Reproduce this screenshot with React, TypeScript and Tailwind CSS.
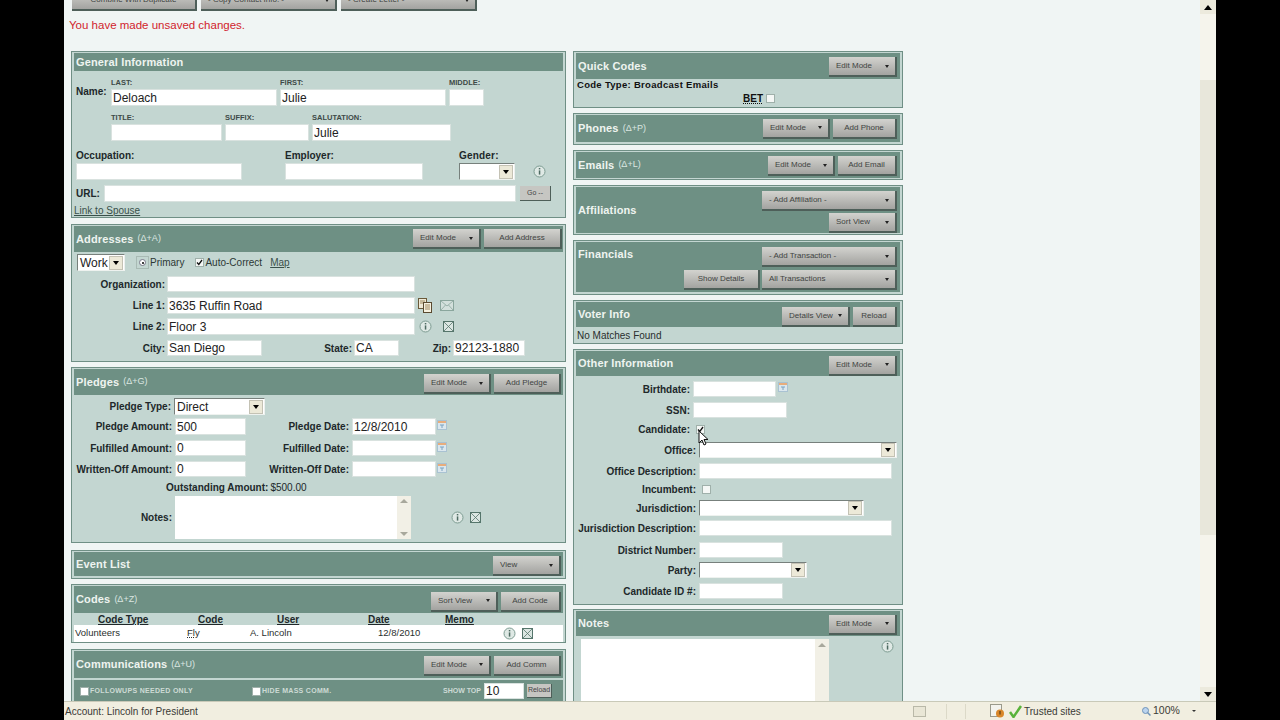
import React from 'react';

const sans = { fontFamily: '"Liberation Sans", Arial, sans-serif' };

function Panel({ className, children }: { className: string; children: React.ReactNode }) {
  return (
    <div className={`border border-[#6f8f85] bg-[#c3d6d1] px-[2px] pt-[1px] overflow-hidden ${className}`}>
      {children}
    </div>
  );
}

function Header({ title, hint, className, btnClass = '', children }: { title: string; hint?: string; className: string; btnClass?: string; children?: React.ReactNode }) {
  return (
    <div className={`flex items-center bg-[#6e9084] pl-[2px] ${className}`}>
      <span className="whitespace-nowrap text-[11px] font-bold tracking-[0.15px] text-[#eef4f0]">{title}</span>
      {hint && <span className="ml-[4px] whitespace-nowrap text-[9px] text-[#dbe6e1]">{hint}</span>}
      <div className={`ml-auto flex gap-[3px] ${btnClass}`}>{children}</div>
    </div>
  );
}

function Btn({ label, w, caret }: { label: string; w: string; caret?: boolean }) {
  return (
    <div className={`flex h-[20px] shrink-0 items-center whitespace-nowrap bg-gradient-to-b from-[#d3d3cf] to-[#a3a3a0] border-r-2 border-b-2 border-[#4e5f59] text-[8px] text-[#3f4442] ${w} ${caret ? 'pl-[7px] pr-[6px]' : 'justify-center'}`}>
      <span>{label}</span>
      {caret && <span className="ml-auto h-0 w-0 border-x-[2.5px] border-t-[3px] border-x-transparent border-t-[#222]" />}
    </div>
  );
}

function Input({ w, value, h = 'h-[17px]', cls = 'text-[12px]' }: { w: string; value?: string; h?: string; cls?: string }) {
  return (
    <input
      readOnly
      value={value ?? ''}
      className={`block shrink-0 bg-white border border-[#d9e2df] px-[1px] text-[#222] outline-none ${cls} ${w} ${h}`}
    />
  );
}

function Select({ w, value, h = 'h-[17px]' }: { w: string; value?: string; h?: string }) {
  return (
    <div className={`flex shrink-0 items-center bg-white border-t border-l border-[#77807c] border-r border-r-[#eef2ef] border-b border-b-[#eef2ef] pl-[2px] pr-[1px] text-[12px] text-[#222] ${w} ${h}`}>
      <span>{value}</span>
      <span className="ml-auto flex h-[14px] w-[14px] items-center justify-center bg-[#ece9d8] border border-[#c4c2b4]">
        <span className="h-0 w-0 border-x-[3.5px] border-t-[4px] border-x-transparent border-t-black" />
      </span>
    </div>
  );
}

function Label({ w, children }: { w: string; children: React.ReactNode }) {
  return <span className={`shrink-0 whitespace-nowrap text-right text-[10px] font-bold text-[#20282a] ${w}`}>{children}</span>;
}

function Micro({ children }: { children: React.ReactNode }) {
  return <div className="h-[12px] text-[7.5px] font-bold leading-[12px] text-[#3d4a47]">{children}</div>;
}

function Info({ className = '' }: { className?: string }) {
  return (
    <svg className={`shrink-0 ${className}`} width="13" height="13" viewBox="0 0 13 13" fill="none">
      <circle cx="6.5" cy="6.5" r="5.5" stroke="#7d9c92" strokeWidth="1" fill="#dfe9e5" />
      <rect x="5.8" y="5.4" width="1.5" height="4.2" fill="#4d6a61" />
      <rect x="5.8" y="3" width="1.5" height="1.4" fill="#4d6a61" />
    </svg>
  );
}

function XBox({ className = '' }: { className?: string }) {
  return (
    <svg className={`shrink-0 ${className}`} width="11" height="11" viewBox="0 0 11 11" fill="none">
      <rect x="0.5" y="0.5" width="10" height="10" stroke="#55756b" fill="#dbe6e2" />
      <path d="M1 1l9 9M10 1l-9 9" stroke="#55756b" strokeWidth="0.8" />
    </svg>
  );
}

function Envelope({ className = '' }: { className?: string }) {
  return (
    <svg className={`shrink-0 ${className}`} width="14" height="11" viewBox="0 0 14 11" fill="none">
      <rect x="0.5" y="0.5" width="13" height="10" stroke="#8aa69d" fill="#d3e0dc" />
      <path d="M1 1l6 5 6-5M1 10l4.5-5M13 10L8.500 5" stroke="#8aa69d" strokeWidth="0.8" />
    </svg>
  );
}

function Copy({ className = '' }: { className?: string }) {
  return (
    <svg className={`shrink-0 ${className}`} width="14" height="15" viewBox="0 0 14 15" fill="none">
      <rect x="0.5" y="0.500" width="8" height="10" fill="#efe9d6" stroke="#6b5a3a" />
      <rect x="5.500" y="4.500" width="8" height="10" fill="#f6f1df" stroke="#5a4a30" />
      <path d="M2 3h5M2 5h3M7 7h5M7 9h5M7 11h5" stroke="#8a6f3f" strokeWidth="0.8" />
    </svg>
  );
}

function Cal({ className = '' }: { className?: string }) {
  return (
    <svg className={`shrink-0 ${className}`} width="10" height="10" viewBox="0 0 10 10" fill="none">
      <rect x="0.500" y="0.500" width="9" height="9" fill="#dbe7ee" stroke="#a9c2d2" />
      <rect x="1" y="1" width="8" height="2" fill="#e8ad7c" />
      <path d="M3 5h4M5 5v3" stroke="#7ba3c2" strokeWidth="1" />
    </svg>
  );
}

function Check({ checked, className = '' }: { checked?: boolean; className?: string }) {
  return (
    <span className={`flex h-[9px] w-[9px] shrink-0 items-center justify-center bg-[#f4f7f5] border border-[#9fb0aa] ${className}`}>
      {checked && (
        <svg width="7" height="7" viewBox="0 0 7 7" fill="none">
          <path d="M1 3.500l1.800 2L6 1" stroke="#111" strokeWidth="1.300" />
        </svg>
      )}
    </span>
  );
}

function LeftColumn() {
  return (
    <div className="flex w-[495px] shrink-0 flex-col">
      <Panel className="h-[167px]">
        <Header title="General Information" className="h-[18px]" />
        <div className="mt-[6px] flex">
          <div className="w-[37px] pl-[2px] pt-[7px] text-[10px] font-bold text-[#20282a]">Name:</div>
          <div className="flex gap-[3px]">
            <div><Micro>LAST:</Micro><Input w="w-[166px]" value="Deloach" /></div>
            <div><Micro>FIRST:</Micro><Input w="w-[166px]" value="Julie" /></div>
            <div><Micro>MIDDLE:</Micro><Input w="w-[35px]" /></div>
          </div>
        </div>
        <div className="ml-[37px] mt-[6px] flex gap-[3px]">
          <div><Micro>TITLE:</Micro><Input w="w-[111px]" /></div>
          <div><Micro>SUFFIX:</Micro><Input w="w-[84px]" /></div>
          <div><Micro>SALUTATION:</Micro><Input w="w-[139px]" value="Julie" /></div>
        </div>
        <div className="ml-[2px] mt-[7px] flex items-end">
          <div>
            <div className="h-[15px] text-[10px] font-bold text-[#20282a]">Occupation:</div>
            <Input w="w-[166px]" />
          </div>
          <div className="ml-[43px]">
            <div className="h-[15px] text-[10px] font-bold text-[#20282a]">Employer:</div>
            <Input w="w-[138px]" />
          </div>
          <div className="ml-[36px]">
            <div className="h-[15px] text-[10px] font-bold tracking-[0.2px] text-[#20282a]">Gender:</div>
            <Select w="w-[56px]" />
          </div>
          <Info className="mb-[2px] ml-[18px]" />
        </div>
        <div className="ml-[2px] mt-[5px] flex items-center">
          <span className="w-[28px] text-[10px] font-bold text-[#20282a]">URL:</span>
          <Input w="w-[412px]" />
          <div className="ml-[4px] flex h-[15px] w-[31px] items-center justify-center bg-[#c6c6c2] border-r border-b border-[#4e5f59] text-[7px] text-[#444]">Go --</div>
        </div>
        <div className="mt-[1px] text-[10px] text-[#39504a] underline">Link to Spouse</div>
      </Panel>

      <Panel className="mt-[6px] h-[138px]">
        <Header title="Addresses" hint="(Δ+A)" className="h-[26px] pr-[1px]">
          <Btn label="Edit Mode" w="w-[68px]" caret />
          <Btn label="Add Address" w="w-[78px]" />
        </Header>
        <div className="ml-[3px] mt-[2px] flex items-center text-[10px] text-[#2c3835]">
          <Select w="w-[48px]" value="Work" />
          <span className="ml-[11px] flex h-[13px] w-[13px] items-center justify-center border border-[#a8bab4]">
            <span className="h-[7px] w-[7px] rounded-full border border-[#778] bg-[#fff] p-[1.500px]"><span className="block h-full w-full rounded-full bg-black" /></span>
          </span>
          <span className="ml-[1px]">Primary</span>
          <Check checked className="ml-[11px]" />
          <span className="ml-[1px]">Auto-Correct</span>
          <span className="ml-[8px] underline text-[#39504a]">Map</span>
        </div>
        <div className="mt-[5px] flex items-center gap-[2px]">
          <Label w="w-[91px]">Organization:</Label>
          <Input w="w-[248px]" h="h-[16px]" />
        </div>
        <div className="mt-[5px] flex items-center gap-[2px]">
          <Label w="w-[91px]">Line 1:</Label>
          <Input w="w-[248px]" value="3635 Ruffin Road" />
          <Copy className="ml-[1px]" />
          <Envelope className="ml-[6px]" />
        </div>
        <div className="mt-[4px] flex items-center gap-[2px]">
          <Label w="w-[91px]">Line 2:</Label>
          <Input w="w-[248px]" value="Floor 3" />
          <Info className="ml-[2px]" />
          <XBox className="ml-[9px]" />
        </div>
        <div className="mt-[5px] flex items-center gap-[2px]">
          <Label w="w-[91px]">City:</Label>
          <Input w="w-[95px]" value="San Diego" h="h-[16px]" />
          <Label w="w-[88px]">State:</Label>
          <Input w="w-[45px]" value="CA" h="h-[16px]" />
          <Label w="w-[50px]">Zip:</Label>
          <Input w="w-[72px]" value="92123-1880" h="h-[16px]" />
        </div>
      </Panel>

      <Panel className="mt-[5px] h-[176px]">
        <Header title="Pledges" hint="(Δ+G)" className="h-[26px] pr-[2px]" btnClass="mt-[4px]">
          <Btn label="Edit Mode" w="w-[67px]" caret />
          <Btn label="Add Pledge" w="w-[67px]" />
        </Header>
        <div className="mt-[3px] flex items-center gap-[3px]">
          <Label w="w-[97px]">Pledge Type:</Label>
          <Select w="w-[91px]" value="Direct" />
        </div>
        <div className="mt-[3px] flex items-center gap-[3px]">
          <Label w="w-[98px]">Pledge Amount:</Label>
          <Input w="w-[71px]" value="500" />
          <Label w="w-[100px]">Pledge Date:</Label>
          <Input w="w-[84px]" value="12/8/2010" />
          <Cal className="-ml-[2px] mb-[3px]" />
        </div>
        <div className="mt-[5px] flex items-center gap-[3px]">
          <Label w="w-[98px]">Fulfilled Amount:</Label>
          <Input w="w-[71px]" value="0" h="h-[16px]" />
          <Label w="w-[100px]">Fulfilled Date:</Label>
          <Input w="w-[84px]" h="h-[16px]" />
          <Cal className="-ml-[2px] mb-[3px]" />
        </div>
        <div className="mt-[5px] flex items-center gap-[3px]">
          <Label w="w-[98px]">Written-Off Amount:</Label>
          <Input w="w-[71px]" value="0" h="h-[16px]" />
          <Label w="w-[100px]">Written-Off Date:</Label>
          <Input w="w-[84px]" h="h-[16px]" />
          <Cal className="-ml-[2px] mb-[3px]" />
        </div>
        <div className="ml-[92px] mt-[4px] flex h-[12px] items-center text-[10px] text-[#20282a]">
          <span className="font-bold">Outstanding Amount:</span>
          <span className="ml-[2px]">$500.00</span>
        </div>
        <div className="mt-[3px] flex items-center gap-[3px]">
          <Label w="w-[98px]">Notes:</Label>
          <div className="flex h-[43px] w-[236px] justify-end bg-white">
            <div className="flex w-[14px] flex-col justify-between bg-[#f2f0e6] py-[3px]">
              <span className="mx-auto h-0 w-0 border-x-[4px] border-b-[4px] border-x-transparent border-b-[#a8a89c]" />
              <span className="mx-auto h-0 w-0 border-x-[4px] border-t-[4px] border-x-transparent border-t-[#a8a89c]" />
            </div>
          </div>
          <Info className="ml-[37px]" />
          <XBox className="ml-[3px]" />
        </div>
      </Panel>

      <Panel className="mt-[7px] h-[29px]">
        <Header title="Event List" className="h-[24px] pr-[2px]" btnClass="mt-[4px]">
          <Btn label="View" w="w-[68px]" caret />
        </Header>
      </Panel>

      <Panel className="mt-[5px] h-[59px]">
        <Header title="Codes" hint="(Δ+Z)" className="h-[27px] pr-[2px]" btnClass="mt-[4px]">
          <Btn label="Sort View" w="w-[67px]" caret />
          <Btn label="Add Code" w="w-[60px]" />
        </Header>
        <div className="flex h-[12px] items-center text-[10px] font-bold text-[#20282a] underline">
          <span className="ml-[24px] w-[100px]">Code Type</span>
          <span className="w-[79px]">Code</span>
          <span className="w-[91px]">User</span>
          <span className="w-[77px]">Date</span>
          <span>Memo</span>
        </div>
        <div className="flex h-[17px] items-center bg-white text-[9.500px] text-[#2a2f2e]">
          <span className="ml-[1px] w-[112px]">Volunteers</span>
          <span className="w-[63px] font-medium underline decoration-dotted">Fly</span>
          <span className="w-[128px]">A. Lincoln</span>
          <span className="w-[125px]">12/8/2010</span>
          <Info />
          <XBox className="ml-[6px]" />
        </div>
      </Panel>

      <Panel className="mt-[6px] h-[70px]">
        <Header title="Communications" hint="(Δ+U)" className="h-[27px] pr-[2px]" btnClass="mt-[2px]">
          <Btn label="Edit Mode" w="w-[67px]" caret />
          <Btn label="Add Comm" w="w-[67px]" />
        </Header>
        <div className="mt-[2px] h-[30px] bg-[#6e9084] pt-[3px]">
          <div className="flex h-[16px] items-center whitespace-nowrap text-[7px] font-bold tracking-[0.3px] text-[#cddbd5]">
            <Check className="ml-[6px] bg-white" />
            <span className="ml-[1px] w-[162px]">FOLLOWUPS NEEDED ONLY</span>
            <Check className="bg-white" />
            <span className="ml-[1px] w-[181px]">HIDE MASS COMM.</span>
            <span className="w-[41px] tracking-normal">SHOW TOP</span>
            <Input w="w-[40px]" value="10" h="h-[16px]" cls="text-[12px] font-normal tracking-normal" />
            <div className="ml-[3px] flex h-[14px] w-[25px] items-center justify-center bg-[#c6c6c2] border-r border-b border-[#4e5f59] text-[7px] font-normal tracking-normal text-[#444]">Reload</div>
          </div>
        </div>
      </Panel>
    </div>
  );
}

function RightColumn() {
  return (
    <div className="ml-[7px] flex w-[330px] shrink-0 flex-col">
      <Panel className="h-[57px]">
        <Header title="Quick Codes" className="h-[26px] pr-[3px]" btnClass="mt-[2px]">
          <Btn label="Edit Mode" w="w-[68px]" caret />
        </Header>
        <div className="ml-[1px] h-[12px] text-[9.500px] font-bold leading-[12px] tracking-[0.3px] text-[#111]">Code Type: Broadcast Emails</div>
        <div className="mr-[125px] flex items-center justify-end text-[10px] font-bold text-[#111]">
          <span className="underline decoration-dotted">BET</span>
          <Check className="ml-[3px]" />
        </div>
      </Panel>

      <Panel className="mt-[5px] h-[32px]">
        <Header title="Phones" hint="(Δ+P)" className="h-[27px] pr-[3px]">
          <Btn label="Edit Mode" w="w-[67px]" caret />
          <Btn label="Add Phone" w="w-[64px]" />
        </Header>
      </Panel>

      <Panel className="mt-[5px] h-[30px]">
        <Header title="Emails" hint="(Δ+L)" className="h-[26px] pr-[3px]" btnClass="mt-[2px]">
          <Btn label="Edit Mode" w="w-[67px]" caret />
          <Btn label="Add Email" w="w-[59px]" />
        </Header>
      </Panel>

      <Panel className="mt-[5px] h-[50px]">
        <Header title="Affiliations" className="h-[46px] pr-[3px]" btnClass="mt-[4px]">
          <div className="flex flex-col items-end gap-[2px]">
            <Btn label="- Add Affiliation -" w="w-[135px]" caret />
            <Btn label="Sort View" w="w-[68px]" caret />
          </div>
        </Header>
      </Panel>

      <Panel className="mt-[5px] h-[55px]">
        <div className="flex h-[50px] bg-[#6e9084] pl-[2px] pr-[3px]">
          <span className="mt-[4px] text-[11px] font-bold tracking-[0.15px] text-[#eef4f0]">Financials</span>
          <div className="ml-auto mt-[5px] flex flex-col items-end gap-[3px]">
            <Btn label="- Add Transaction -" w="w-[135px]" caret />
            <div className="flex gap-[2px]">
              <Btn label="Show Details" w="w-[76px]" />
              <Btn label="All Transactions" w="w-[135px]" caret />
            </div>
          </div>
        </div>
      </Panel>

      <Panel className="mt-[5px] h-[44px]">
        <Header title="Voter Info" className="h-[25px] pr-[3px]" btnClass="mt-[4px]">
          <Btn label="Details View" w="w-[68px]" caret />
          <Btn label="Reload" w="w-[44px]" />
        </Header>
        <div className="mt-[2px] ml-[1px] h-[14px] text-[10px] leading-[14px] text-[#2a2f2e]">No Matches Found</div>
      </Panel>

      <Panel className="mt-[5px] h-[256px]">
        <Header title="Other Information" className="h-[25px] pr-[3px]" btnClass="mt-[4px]">
          <Btn label="Edit Mode" w="w-[68px]" caret />
        </Header>
        <div className="mt-[5px] flex items-center gap-[3px]">
          <Label w="w-[114px]">Birthdate:</Label>
          <Input w="w-[83px]" h="h-[16px]" />
          <Cal className="-ml-[1px] mb-[4px]" />
        </div>
        <div className="mt-[5px] flex items-center gap-[3px]">
          <Label w="w-[114px]">SSN:</Label>
          <Input w="w-[94px]" h="h-[16px]" />
        </div>
        <div className="mt-[5px] flex h-[12px] items-center gap-[3px]">
          <Label w="w-[114px]">Candidate:</Label>
          <Check checked className="ml-[3px]" />
        </div>
        <div className="mt-[7px] flex items-center gap-[3px]">
          <Label w="w-[120px]">Office:</Label>
          <Select w="w-[198px]" h="h-[16px]" />
        </div>
        <div className="mt-[5px] flex items-center gap-[3px]">
          <Label w="w-[120px]">Office Description:</Label>
          <Input w="w-[193px]" h="h-[16px]" />
        </div>
        <div className="mt-[5px] flex h-[11px] items-center gap-[3px]">
          <Label w="w-[120px]">Incumbent:</Label>
          <Check className="ml-[3px]" />
        </div>
        <div className="mt-[5px] flex items-center gap-[3px]">
          <Label w="w-[120px]">Jurisdiction:</Label>
          <Select w="w-[165px]" h="h-[16px]" />
        </div>
        <div className="mt-[4px] flex items-center gap-[3px]">
          <Label w="w-[120px]">Jurisdiction Description:</Label>
          <Input w="w-[193px]" h="h-[16px]" />
        </div>
        <div className="mt-[6px] flex items-center gap-[3px]">
          <Label w="w-[120px]">District Number:</Label>
          <Input w="w-[84px]" h="h-[16px]" />
        </div>
        <div className="mt-[4px] flex items-center gap-[3px]">
          <Label w="w-[120px]">Party:</Label>
          <Select w="w-[108px]" h="h-[16px]" />
        </div>
        <div className="mt-[5px] flex items-center gap-[3px]">
          <Label w="w-[120px]">Candidate ID #:</Label>
          <Input w="w-[84px]" h="h-[16px]" />
        </div>
      </Panel>

      <Panel className="mt-[4px] h-[110px]">
        <Header title="Notes" className="h-[25px] pr-[3px]" btnClass="mt-[2px]">
          <Btn label="Edit Mode" w="w-[68px]" caret />
        </Header>
        <div className="mt-[3px] flex items-start">
          <div className="ml-[5px] flex h-[70px] w-[248px] justify-end bg-white">
            <div className="w-[14px] bg-[#f2f0e6] pt-[4px]">
              <span className="mx-auto block h-0 w-0 border-x-[4px] border-b-[4px] border-x-transparent border-b-[#a8a89c]" />
            </div>
          </div>
          <Info className="ml-[52px] mt-[1px]" />
        </div>
      </Panel>
    </div>
  );
}

export default function App() {
  return (
    <div className="relative flex h-[720px] w-[1280px] overflow-hidden bg-black" style={sans}>
      <main className="ml-[64px] flex h-full w-[1152px] flex-col bg-[#f0f5f4]">
        <div className="flex h-[701px]">
          <div className="h-full w-[1136px] overflow-hidden pl-[5px]">
            <div className="-mt-[9px] ml-[3px] flex h-[20px] gap-[4px]">
              <Btn label="Combine With Duplicate" w="w-[125px]" />
              <Btn label="- Copy Contact Info. -" w="w-[136px]" caret />
              <Btn label="- Create Letter -" w="w-[136px]" caret />
            </div>
            <div className="mt-[7px] h-[14px] text-[11.500px] leading-[14px] text-[#d0242c]">You have made unsaved changes.</div>
            <div className="ml-[2px] mt-[19px] flex">
              <LeftColumn />
              <RightColumn />
            </div>
          </div>

          {/* page scrollbar */}
          <div className="flex w-[16px] flex-col bg-[#f5f4ec]">
            <div className="flex h-[14px] items-center justify-center bg-[#eceadd]">
              <span className="h-0 w-0 border-x-[4px] border-b-[5px] border-x-transparent border-b-black" />
            </div>
            <div className="mt-[66px] h-[455px] bg-[#e8e7db]" />
            <div className="mt-auto flex h-[14px] items-center justify-center bg-[#eceadd]">
              <span className="h-0 w-0 border-x-[4px] border-t-[5px] border-x-transparent border-t-black" />
            </div>
          </div>
        </div>

        {/* IE status bar */}
        <div className="flex h-[19px] items-center whitespace-nowrap border-t border-[#c9c9b8] bg-[#f1eee0] text-[10px] text-[#3a3a36]">
          <span className="ml-[1px] w-[848px]">Account: Lincoln for President</span>
          <div className="h-[11px] w-[13px] border border-[#b9b8a8] bg-[#e9e6d6]" />
          <div className="ml-[20px] h-[15px] w-px bg-[#dcd9c8]" />
          <div className="ml-[18px] h-[15px] w-px bg-[#dcd9c8]" />
          <svg className="ml-[24px]" width="15" height="14" viewBox="0 0 15 14" fill="none">
            <rect x="0.500" y="0.500" width="11" height="12" fill="#f3f3ee" stroke="#9a9a8c" />
            <circle cx="10" cy="9.500" r="4" fill="#d9862a" />
            <rect x="9.500" y="7" width="1" height="3.500" fill="#3a2a10" />
          </svg>
          <svg className="ml-[4px]" width="13" height="13" viewBox="0 0 13 13" fill="none">
            <path d="M1 7l3.500 5L12 1" stroke="#58b23a" strokeWidth="2.500" />
          </svg>
          <span className="ml-[2px] w-[53px]">Trusted sites</span>
          <svg className="ml-[65px]" width="9" height="9" viewBox="0 0 9 9" fill="none">
            <circle cx="3.500" cy="3.500" r="3" fill="#bcd4ee" stroke="#6f93ba" />
            <path d="M5.500 5.500L8.500 8.500" stroke="#6f93ba" strokeWidth="1.500" />
          </svg>
          <span className="ml-[2px] w-[25px] text-[10.500px]">100%</span>
          <span className="ml-[14px] h-0 w-0 border-x-[2px] border-t-[2px] border-x-transparent border-t-[#333]" />
        </div>
      </main>

      {/* mouse pointer over the Candidate checkbox */}
      <svg className="absolute left-[698px] top-[430px]" width="11" height="16" viewBox="0 0 11 16">
        <path d="M1 1v12l3-3 2 5 2-1-2-4.500h4z" fill="#fff" stroke="#111" strokeWidth="1" />
      </svg>
    </div>
  );
}
